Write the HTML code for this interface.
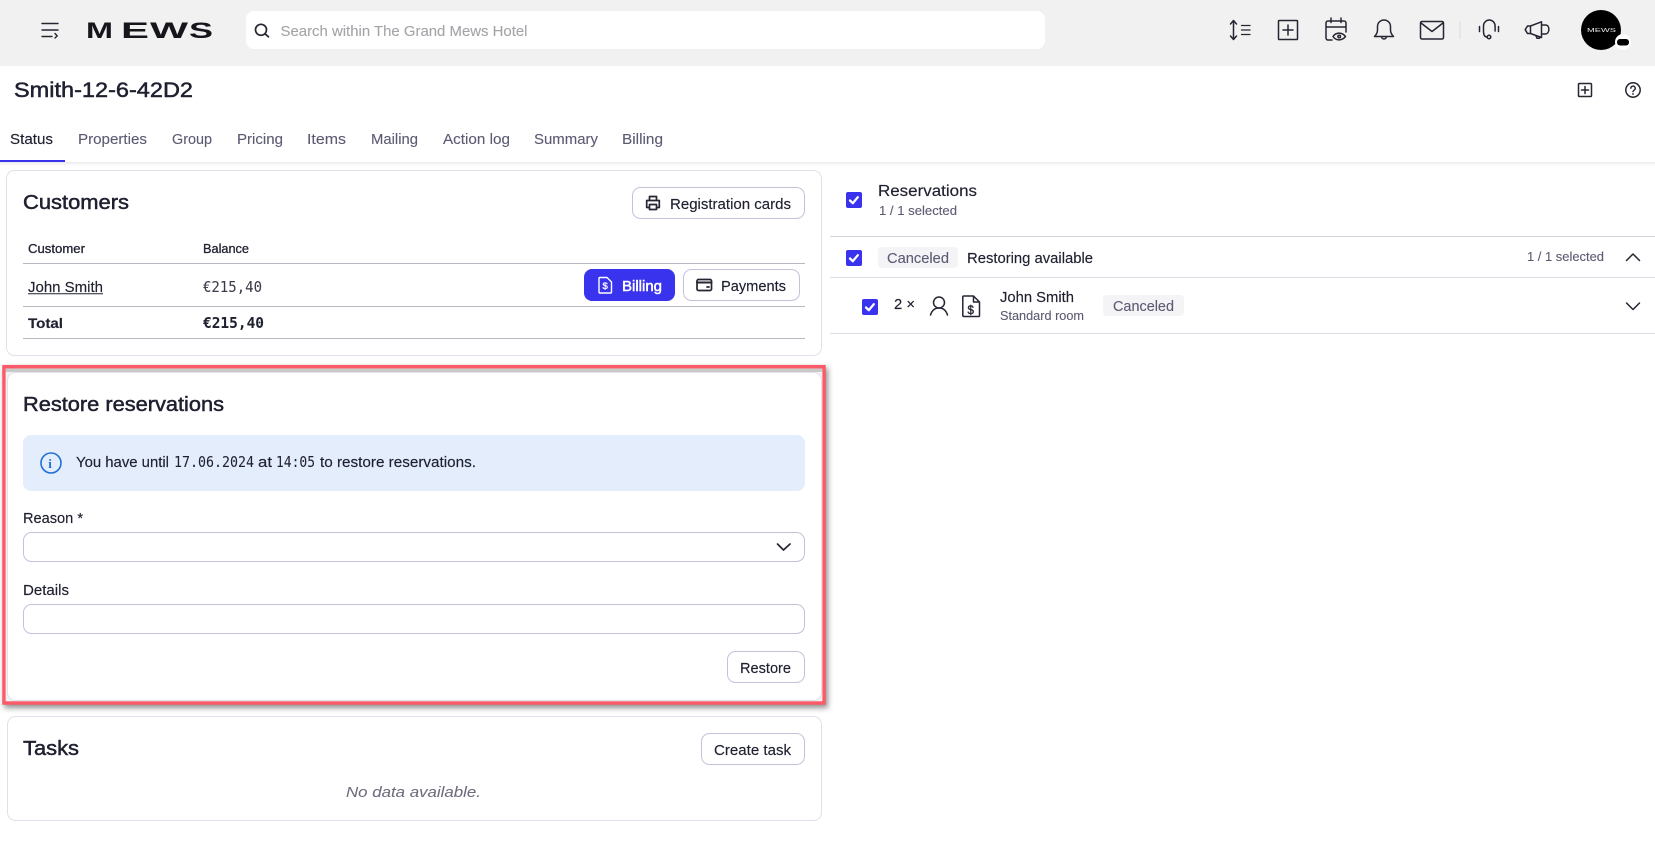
<!DOCTYPE html>
<html lang="en"><head><meta charset="utf-8"><title>Smith-12-6-42D2</title>
<style>
html,body{margin:0;padding:0;background:#fff;width:1655px;height:851px;overflow:hidden}
svg{display:block}
text{font-family:"Liberation Sans",sans-serif;font-size:15px;fill:#1f2030;stroke:#1f2030;stroke-width:.16px;white-space:pre}
.t{font-size:20px;stroke-width:.5px}
.g{fill:#5c5b73;stroke:#5c5b73;stroke-width:.12px}
.s{font-size:13px}
.n{font-family:"DejaVu Sans Mono",monospace;font-size:14px;stroke-width:.05px}
.i{fill:none;stroke:#252632;stroke-width:1.5;stroke-linecap:round;stroke-linejoin:round}
.c{fill:none;stroke:#fff;stroke-width:2.3;stroke-linecap:round;stroke-linejoin:round}
.card{fill:#fff;stroke:#e2e0ea;stroke-width:1}
.btn{fill:#fff;stroke:#c5c1da;stroke-width:1}
.ln{stroke:#b9b8c2;stroke-width:1}
.rl{stroke:#dddbe6;stroke-width:1}
.lg{font-size:22px;font-weight:700;fill:#15151c;stroke:none}
</style></head><body>
<svg width="1655" height="851" viewBox="0 0 1655 851" xmlns="http://www.w3.org/2000/svg">
<defs><linearGradient id="sh" x1="0" y1="0" x2="0" y2="1"><stop offset="0" stop-color="#ececf0"/><stop offset="1" stop-color="#fff"/></linearGradient></defs>

<!-- top bar -->
<rect width="1655" height="66" fill="#f1f1f1"/>
<g class="i" style="stroke-width:1.4">
<path d="M42 23.500H58M42 30H58M42 36.500H52M55 33.500l2.200 2.400L55 38"/>
</g>
<text class="lg" x="86" y="38" textLength="27" lengthAdjust="spacingAndGlyphs">M</text>
<text class="lg" x="121" y="38" textLength="28" lengthAdjust="spacingAndGlyphs">E</text>
<text class="lg" x="150" y="38" textLength="38" lengthAdjust="spacingAndGlyphs">W</text>
<text class="lg" x="189" y="38" textLength="24" lengthAdjust="spacingAndGlyphs">S</text>
<rect x="246" y="11" width="799" height="38" rx="8" fill="#fff"/>
<g class="i" style="stroke-width:1.7"><circle cx="261" cy="29.800" r="5.500"/><path d="M265 33.800L268.500 36.800"/></g>
<text x="280.500" y="36" textLength="247" lengthAdjust="spacingAndGlyphs" style="fill:#a3a3a8;stroke:#a3a3a8;stroke-width:.1px">Search within The Grand Mews Hotel</text>

<!-- top right icons -->
<g class="i">
<path d="M1233.500 21V39M1230.500 24l3-3.500 3 3.500M1230.500 36l3 3.500 3-3.500"/>
<path d="M1241.500 25.500H1250M1241.500 30H1250M1241.500 34.500H1250" style="stroke-width:1.300"/>
<rect x="1278.500" y="20.500" width="19" height="19" rx=".8"/><path d="M1288 25V35M1283 30H1293"/>
<path d="M1331 18V22.500M1341 18V22.500M1326 27H1346M1346 32V23a2 2 0 0 0-2-2H1328a2 2 0 0 0-2 2V38a2 2 0 0 0 2 2H1332"/>
<path d="M1333 36.500c3-4.500 9-4.500 12.500 0c-3.500 4.500-9.500 4.500-12.500 0z"/><circle cx="1339.200" cy="36.500" r="1.300"/>
<path d="M1374.500 36.500c2-2 3-3.700 3-6.500v-3.500a6.500 6.500 0 0 1 13 0V30c0 2.800 1 4.500 3 6.500zM1381.500 36.500a2.500 2.500 0 0 0 5 0"/>
<rect x="1420.500" y="21.500" width="23" height="17.500" rx="1.500"/><path d="M1421 23L1432 31.500L1443 23"/>
<path d="M1483.500 31V26a5.800 6 0 0 1 11.600 0V31M1483.500 31c0 4 1.200 6 3.500 6M1479.500 26.500V31.500M1498.500 26.500V31.500"/><circle cx="1489" cy="37" r="1.800"/>
<path d="M1530.500 26L1541.500 21.800V37.500L1530.500 33.500zM1530.500 26h-3l-2.300 3.700 2.300 3.800h3M1541.500 25h4c4.500 0 4.500 8.500 0 9h-4M1536 36l1 2.300h2.500l.5-1.500"/>
</g>
<line x1="1460" y1="21" x2="1460" y2="39" stroke="#dcdce6"/>
<circle cx="1601" cy="30" r="20" fill="#000"/>
<text x="1587" y="32.200" textLength="29" lengthAdjust="spacingAndGlyphs" style="font-size:5.500px;fill:#e8e8e8;stroke:none">MEWS</text>
<circle cx="1623" cy="42" r="8" fill="#fff"/><rect x="1617" y="39" width="12" height="6.500" rx="3" fill="#000"/>

<!-- page header -->
<text x="14" y="97" class="t" textLength="179" lengthAdjust="spacingAndGlyphs" style="font-size:21px">Smith-12-6-42D2</text>
<g class="i" style="stroke-width:1.500">
<rect x="1578.500" y="83.500" width="13" height="13" rx="1"/><path d="M1585 86.500V93.500M1581.500 90H1588.500"/>
<circle cx="1633" cy="90" r="7.200"/><path d="M1630.800 88.300a2.200 2.200 0 1 1 3.300 1.900c-.8.500-1.100.9-1.100 1.500" style="stroke-width:1.400"/>
</g>
<circle cx="1633" cy="94" r=".9" fill="#252632"/>

<!-- tabs -->
<text x="10" y="144" textLength="43" lengthAdjust="spacingAndGlyphs">Status</text>
<text class="g" x="78" y="144" textLength="69" lengthAdjust="spacingAndGlyphs">Properties</text>
<text class="g" x="172" y="144" textLength="40" lengthAdjust="spacingAndGlyphs">Group</text>
<text class="g" x="237" y="144" textLength="46" lengthAdjust="spacingAndGlyphs">Pricing</text>
<text class="g" x="307" y="144" textLength="39" lengthAdjust="spacingAndGlyphs">Items</text>
<text class="g" x="371" y="144" textLength="47" lengthAdjust="spacingAndGlyphs">Mailing</text>
<text class="g" x="443" y="144" textLength="67" lengthAdjust="spacingAndGlyphs">Action log</text>
<text class="g" x="534" y="144" textLength="64" lengthAdjust="spacingAndGlyphs">Summary</text>
<text class="g" x="622" y="144" textLength="41" lengthAdjust="spacingAndGlyphs">Billing</text>
<rect x="0" y="162" width="1655" height="4" fill="url(#sh)"/>
<rect x="0" y="160" width="65" height="2" fill="#3a33ee"/>

<!-- customers card -->
<rect class="card" x="6.500" y="170.500" width="815" height="185" rx="8"/>
<text class="t" x="23" y="209" textLength="106" lengthAdjust="spacingAndGlyphs">Customers</text>
<rect class="btn" x="632.500" y="187.500" width="172" height="31" rx="8"/>
<g class="i" style="stroke-width:1.700">
<path d="M649.500 200V196.500H656.500V200M649.500 207.500H646.700V200.500H659.300V207.500H656.500M649.500 204.500H656.500V209.500H649.500z"/>
</g>
<text x="670" y="209" textLength="121" lengthAdjust="spacingAndGlyphs">Registration cards</text>
<text class="s" x="28" y="253" textLength="57" lengthAdjust="spacingAndGlyphs" style="stroke-width:.3px">Customer</text>
<text class="s" x="203" y="253" textLength="46" lengthAdjust="spacingAndGlyphs" style="stroke-width:.3px">Balance</text>
<line class="ln" x1="23" y1="263.500" x2="805" y2="263.500"/>
<text x="28" y="292" textLength="75" lengthAdjust="spacingAndGlyphs">John Smith</text>
<line x1="28" y1="293.700" x2="103" y2="293.700" stroke="#1f2030" stroke-width="1"/>
<text class="n" x="203" y="292" textLength="59" lengthAdjust="spacingAndGlyphs" style="fill:#3b3c4b;font-size:15px">€215,40</text>
<rect x="584" y="269" width="91" height="32" rx="8" fill="#3a33ee"/>
<path d="M600 277.500h7l4.500 4.500v10a1 1 0 0 1-1 1H600a1 1 0 0 1-1-1V278.500a1 1 0 0 1 1-1z" fill="none" stroke="#fff" stroke-width="1.400" stroke-linejoin="round"/>
<text x="602.500" y="289" style="font-size:9.500px;fill:#fff;stroke:#fff;stroke-width:.3px">$</text>
<text x="622" y="291" textLength="40" lengthAdjust="spacingAndGlyphs" style="fill:#fff;stroke:#fff;stroke-width:.5px">Billing</text>
<rect class="btn" x="683.500" y="269.500" width="116" height="31" rx="8"/>
<g class="i" style="stroke-width:1.700"><rect x="697" y="279.500" width="14.500" height="11" rx="1.500"/><path d="M697 282.500H711.500" style="stroke-width:2"/><path d="M707 287H709" /></g>
<text x="721" y="291" textLength="65" lengthAdjust="spacingAndGlyphs">Payments</text>
<line class="ln" x1="23" y1="306.500" x2="805" y2="306.500"/>
<text x="28" y="328" textLength="35" lengthAdjust="spacingAndGlyphs" style="font-size:14px;font-weight:700">Total</text>
<text class="n" x="203" y="328" textLength="61" lengthAdjust="spacingAndGlyphs" style="font-weight:700;font-size:15px">€215,40</text>
<line class="ln" x1="23" y1="338.500" x2="805" y2="338.500"/>

<!-- highlighted restore card -->
<rect x="4" y="366.700" width="820" height="336.300" fill="#fff" stroke="#fb5b68" stroke-width="3.500" style="filter:drop-shadow(2px 3px 3px rgba(0,0,0,.45))"/>
<rect x="5.800" y="368.500" width="816.400" height="5" fill="#c9c9c9"/>
<rect x="5.800" y="372" width="816.400" height="329" fill="#f2f2f2"/>
<rect x="7.500" y="372.500" width="814" height="328" rx="8" fill="#fff" stroke="#e2e0ea"/>
<text class="t" x="23" y="411" textLength="201" lengthAdjust="spacingAndGlyphs">Restore reservations</text>
<rect x="23" y="435" width="782" height="56" rx="8" fill="#e3edfc"/>
<circle cx="51" cy="463" r="10" fill="none" stroke="#1f6fd6" stroke-width="1.600"/>
<text x="48.200" y="468" style="font-size:13px;font-weight:700;fill:#1f6fd6;stroke:none;font-family:'Liberation Serif',serif">i</text>
<text x="76" y="467" textLength="93" lengthAdjust="spacingAndGlyphs">You have until</text>
<text class="n" x="174" y="467" textLength="80" lengthAdjust="spacingAndGlyphs" style="font-size:15px">17.06.2024</text>
<text x="258" y="467" textLength="14" lengthAdjust="spacingAndGlyphs">at</text>
<text class="n" x="276" y="467" textLength="39" lengthAdjust="spacingAndGlyphs" style="font-size:15px">14:05</text>
<text x="320" y="467" textLength="156" lengthAdjust="spacingAndGlyphs">to restore reservations.</text>
<text x="23" y="523" textLength="60" lengthAdjust="spacingAndGlyphs" style="font-size:14.500px">Reason *</text>
<rect class="btn" x="23.500" y="532.500" width="781" height="29" rx="8"/>
<path class="i" d="M777.500 544L783.500 550L790 544" style="stroke-width:1.700"/>
<text x="23" y="595" textLength="46" lengthAdjust="spacingAndGlyphs" style="font-size:14.500px">Details</text>
<rect class="btn" x="23.500" y="604.500" width="781" height="29" rx="8"/>
<rect class="btn" x="727.500" y="651.500" width="77" height="31" rx="8"/>
<text x="740" y="673" textLength="51" lengthAdjust="spacingAndGlyphs">Restore</text>

<!-- tasks card -->
<rect class="card" x="7.500" y="716.500" width="814" height="104" rx="8"/>
<text class="t" x="23" y="755" textLength="56" lengthAdjust="spacingAndGlyphs">Tasks</text>
<rect class="btn" x="701.500" y="733.500" width="103" height="31" rx="8"/>
<text x="714" y="755" textLength="77" lengthAdjust="spacingAndGlyphs">Create task</text>
<text x="346" y="797" textLength="135" lengthAdjust="spacingAndGlyphs" style="font-style:italic;fill:#6c6c7c;stroke:#6c6c7c;stroke-width:.05px">No data available.</text>

<!-- right panel -->
<rect x="846" y="192" width="16" height="16" rx="2" fill="#3a33ee"/><path class="c" d="M850 200.500l2.800 2.700 5-6"/>
<text x="878" y="196" textLength="99" lengthAdjust="spacingAndGlyphs" style="font-size:15.500px">Reservations</text>
<text class="s g" x="879" y="215" textLength="78" lengthAdjust="spacingAndGlyphs">1 / 1 selected</text>
<line x1="830" y1="236.500" x2="1655" y2="236.500" stroke="#d4d2db"/>
<rect x="846" y="250" width="16" height="16" rx="2" fill="#3a33ee"/><path class="c" d="M850 258.500l2.800 2.700 5-6"/>
<rect x="878" y="247" width="80" height="21" rx="4" fill="#f4f4f7"/>
<text class="g" x="887" y="263" textLength="62" lengthAdjust="spacingAndGlyphs">Canceled</text>
<text x="967" y="263" textLength="126" lengthAdjust="spacingAndGlyphs">Restoring available</text>
<text class="s g" x="1527" y="261" textLength="77" lengthAdjust="spacingAndGlyphs">1 / 1 selected</text>
<path class="i" d="M1626.500 260.500L1633 254L1639.500 260.500"/>
<line class="rl" x1="830" y1="277.500" x2="1655" y2="277.500"/>
<rect x="862" y="299" width="16" height="16" rx="2" fill="#3a33ee"/><path class="c" d="M866 307.500l2.800 2.700 5-6"/>
<text x="894" y="309" textLength="21" lengthAdjust="spacingAndGlyphs">2 ×</text>
<g class="i" style="stroke-width:1.500">
<circle cx="939" cy="302.500" r="5.500"/><path d="M930.500 315c1.500-4.800 4.500-7 8.500-7s7 2.200 8.500 7"/>
<path d="M963.800 296h9.700l6 6v13.500a1 1 0 0 1-1 1H963.800a1 1 0 0 1-1-1v-18.500a1 1 0 0 1 1-1zM973.500 296v6h6"/>
</g>
<text x="967.500" y="314" style="font-size:11.500px;fill:#252632;stroke:#252632;stroke-width:.4px">$</text>
<text x="1000" y="302" textLength="74" lengthAdjust="spacingAndGlyphs">John Smith</text>
<text class="s g" x="1000" y="320" textLength="84" lengthAdjust="spacingAndGlyphs">Standard room</text>
<rect x="1103" y="295" width="81" height="21" rx="4" fill="#f4f4f7"/>
<text class="g" x="1113" y="311" textLength="61" lengthAdjust="spacingAndGlyphs">Canceled</text>
<path class="i" d="M1626.500 303L1633 309.500L1639.500 303"/>
<line class="rl" x1="830" y1="333.500" x2="1655" y2="333.500"/>
</svg>
</body></html>
